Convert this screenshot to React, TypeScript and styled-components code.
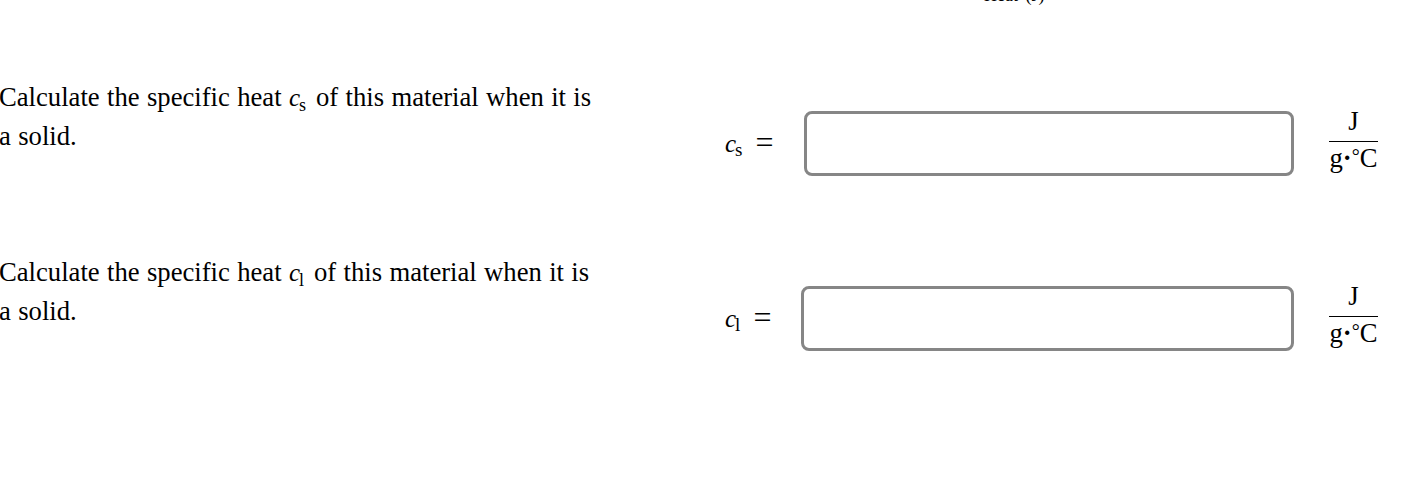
import styled, { createGlobalStyle } from "styled-components";

const GlobalStyle = createGlobalStyle`
  body {
    margin: 0;
    overflow: hidden;
    background-color: #ffffff;
  }
`;

const Page = styled.div`
  height: 487px;
  overflow: hidden;
  color: #000000;
  font-family: "Liberation Serif", "Times New Roman", serif;
  font-size: 26.67px;
`;

const AxisLabel = styled.div`
  display: flex;
  height: 78px;
  padding-left: 984px;
  font-size: 18px;
  line-height: 20px;
  word-spacing: 3px;
`;

const AxisText = styled.div`
  margin-top: -15px;
`;

const Row = styled.div`
  display: flex;
  height: 175px;
`;

const Question = styled.p`
  width: 726px;
  margin: 0 0 0 -1px;
  line-height: 39px;
  word-spacing: 0.7px;
`;

const Symbol = styled.i`
  font-size: 25px;
  line-height: 0;
`;

const Sub = styled.sub<{ $size: number; $drop: number }>`
  margin-left: -1px;
  font-size: ${({ $size }) => $size}px;
  line-height: 0;
  vertical-align: -${({ $drop }) => $drop}px;
`;

const Rest = styled.span`
  margin-left: 2.5px;
`;

const Answer = styled.div`
  display: flex;
  align-items: center;
  width: 653px;
  height: 65px;
  margin-top: 33px;
`;

const Label = styled.label`
  margin-right: 30px;
  white-space: nowrap;
`;

const Equals = styled.span`
  margin-left: 13px;
  font-size: 32px;
  line-height: 0;
  vertical-align: -1px;
`;

const Input = styled.input`
  flex: 1;
  min-width: 0;
  height: 65px;
  box-sizing: border-box;
  border: 3px solid #868686;
  border-radius: 8px;
  background-color: #ffffff;
`;

const Unit = styled.div`
  display: flex;
  flex-direction: column;
  align-items: center;
  width: 49px;
  margin: -8px 0 0 35px;
`;

const Numerator = styled.span`
  width: 100%;
  padding-bottom: 4px;
  border-bottom: 1px solid #000000;
  line-height: 31px;
  text-align: center;
`;

const Denominator = styled.span`
  line-height: 32px;
  white-space: nowrap;
`;

const Dot = styled.b`
  line-height: 0;
`;

const Degree = styled.span`
  font-size: 20px;
  line-height: 0;
  vertical-align: 4px;
`;

const problems = ["s", "l"];

export default function App() {
  return (
    <Page>
      <GlobalStyle />
      <AxisLabel>
        <AxisText>Heat (J)</AxisText>
      </AxisLabel>
      {problems.map((phase) => (
        <Row key={phase}>
          <Question>
            Calculate the specific heat <Symbol>c</Symbol>
            <Sub $size={18} $drop={5}>
              {phase}
            </Sub>
            <Rest> of this material when it is</Rest>
            <br />a solid.
          </Question>
          <Answer>
            <Label htmlFor={phase}>
              <Symbol>c</Symbol>
              <Sub $size={19} $drop={4}>
                {phase}
              </Sub>
              <Equals>=</Equals>
            </Label>
            <Input id={phase} />
            <Unit>
              <Numerator>J</Numerator>
              <Denominator>
                g<Dot>·</Dot>
                <Degree>°</Degree>C
              </Denominator>
            </Unit>
          </Answer>
        </Row>
      ))}
    </Page>
  );
}
